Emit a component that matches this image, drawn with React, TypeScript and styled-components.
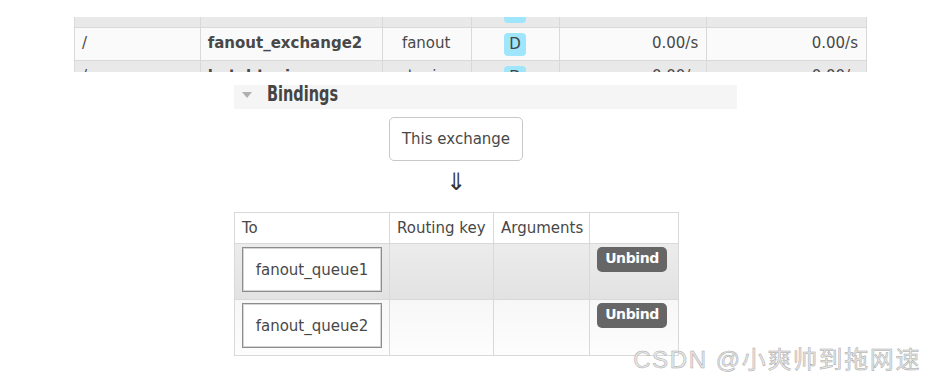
import React, { FC } from 'react';
import styled, { createGlobalStyle } from 'styled-components';

const COLORS = {
  TEXT: '#484848',
  BORDER: '#d9d9d9',
  ROW_DARK: '#e9e9e9',
  ROW_LIGHT: '#fafafa',
  BADGE: '#9fe6fc',
  BAR: '#f5f5f5',
  BUTTON: '#666666'
};

const GlobalStyle = createGlobalStyle`
  html, body {
    margin: 0;
    padding: 0;
    background: #ffffff;
  }
  body {
    font-family: 'DejaVu Sans', Verdana, sans-serif;
    color: ${COLORS.TEXT};
  }
`;

const Page = styled.div`
  position: relative;
  width: 935px;
  height: 382px;
  padding-top: 17px;
  box-sizing: border-box;
  overflow: hidden;
`;

/* cropped strip of the exchanges list */
const StripWindow = styled.div`
  margin-left: 74px;
  width: 793px;
  height: 55px;
  overflow: hidden;
`;

const ExchangeTable = styled.table`
  width: 793px;
  margin-top: -23px;
  border-collapse: collapse;
  font-size: 15px;
`;

const ExchangeRow = styled.tr<{ $dark: boolean }>`
  background: ${(p) => (p.$dark ? COLORS.ROW_DARK : COLORS.ROW_LIGHT)};
`;

const Cell = styled.td<{ $align?: string; $bold?: boolean; $w: number }>`
  width: ${(p) => p.$w}px;
  height: 33px;
  padding: 0 8px 3px 7px;
  box-sizing: border-box;
  border: 1px solid ${COLORS.BORDER};
  text-align: ${(p) => p.$align || 'left'};
  font-weight: ${(p) => (p.$bold ? 700 : 400)};
  white-space: nowrap;
`;

const Badge = styled.span`
  display: inline-block;
  width: 22px;
  height: 23px;
  line-height: 23px;
  margin-top: 3px;
  border-radius: 4px;
  background: ${COLORS.BADGE};
  color: #444;
  text-align: center;
  font-size: 15px;
`;

/* bindings section */
const Section = styled.div`
  margin: 13px 0 0 234px;
  width: 503px;
`;

const SectionBar = styled.div`
  display: flex;
  align-items: flex-end;
  height: 24px;
  padding-left: 8px;
  background: ${COLORS.BAR};
  overflow: hidden;
`;

const Caret = styled.span`
  width: 0;
  height: 0;
  margin: 0 15px 11px 0;
  border-left: 5px solid transparent;
  border-right: 5px solid transparent;
  border-top: 6px solid #b0b0b0;
`;

const SectionTitle = styled.h2`
  margin: 0 0 4px;
  font-size: 14.5px;
  line-height: 15px;
  font-weight: 700;
  color: #444;
  transform: scaleY(1.45);
  transform-origin: bottom;
`;

const SectionBody = styled.div`
  display: flex;
  flex-direction: column;
`;

const ExchangeBox = styled.div`
  margin: 8px 0 0 155px;
  width: 134px;
  height: 44px;
  box-sizing: border-box;
  border: 1px solid #c8c8c8;
  border-radius: 5px;
  display: flex;
  align-items: center;
  justify-content: center;
  font-size: 15px;
`;

const Arrow = styled.div`
  margin-left: 155px;
  width: 134px;
  height: 51px;
  line-height: 42px;
  text-align: center;
  font-size: 24px;
  color: #333;
`;

const BindingsTable = styled.table`
  width: 444px;
  table-layout: fixed;
  border-collapse: collapse;
  font-size: 15px;
`;

const HeadCell = styled.th<{ $w: number }>`
  width: ${(p) => p.$w}px;
  height: 31px;
  padding: 0 6px 1px 7px;
  box-sizing: border-box;
  border: 1px solid ${COLORS.BORDER};
  text-align: left;
  font-weight: 400;
  white-space: nowrap;
  background: #fff;
`;

const BindingRow = styled.tr<{ $dark: boolean }>`
  background: ${(p) =>
    p.$dark
      ? 'linear-gradient(#ececec, #e2e2e2)'
      : 'linear-gradient(#f7f7f7, #fdfdfd)'};
`;

const BindingCell = styled.td`
  height: 56px;
  padding: 3px 6px 6px 7px;
  box-sizing: border-box;
  border: 1px solid ${COLORS.BORDER};
  vertical-align: top;
`;

const QueueBox = styled.div`
  width: 140px;
  height: 45px;
  box-sizing: border-box;
  border: 1px solid #8c8c8c;
  box-shadow: inset 0 0 0 1px #d6d6d6;
  background: #fff;
  display: flex;
  align-items: center;
  justify-content: center;
`;

const UnbindButton = styled.button`
  width: 70px;
  height: 25px;
  padding: 0 0 3px;
  border: none;
  border-radius: 5px;
  background: ${COLORS.BUTTON};
  color: #fff;
  font-family: 'DejaVu Sans', Verdana, sans-serif;
  font-size: 14px;
  letter-spacing: -0.4px;
  font-weight: 700;
`;

const Watermark = styled.div`
  position: absolute;
  right: 14px;
  bottom: 7px;
  font-family: 'Liberation Sans', 'Noto Sans CJK SC', sans-serif;
  font-size: 24px;
  letter-spacing: 1.6px;
  color: #e8e8e8;
  -webkit-text-stroke: 0.5px #a8a8a8;
`;

const COL_W = [126, 182, 89, 89, 147, 160];

const exchanges = [
  // only the bottom edge of this row is inside the crop, its texts are out of view
  { vhost: '', name: '', type: '', in: '', out: '' },
  { vhost: '/', name: 'fanout_exchange2', type: 'fanout', in: '0.00/s', out: '0.00/s' },
  { vhost: '/', name: 'hotel.topic', type: 'topic', in: '0.00/s', out: '0.00/s' }
];

const bindings = ['fanout_queue1', 'fanout_queue2'];

const App: FC = () => (
  <Page>
    <GlobalStyle />
    <StripWindow>
      <ExchangeTable>
        <tbody>
          {exchanges.map((ex, i) => (
            <ExchangeRow key={i} $dark={i !== 1}>
              <Cell $w={COL_W[0]}>{ex.vhost}</Cell>
              <Cell $w={COL_W[1]} $bold>
                {ex.name}
              </Cell>
              <Cell $w={COL_W[2]} $align="center">
                {ex.type}
              </Cell>
              <Cell $w={COL_W[3]} $align="center">
                <Badge>D</Badge>
              </Cell>
              <Cell $w={COL_W[4]} $align="right">
                {ex.in}
              </Cell>
              <Cell $w={COL_W[5]} $align="right">
                {ex.out}
              </Cell>
            </ExchangeRow>
          ))}
        </tbody>
      </ExchangeTable>
    </StripWindow>

    <Section>
      <SectionBar>
        <Caret />
        <SectionTitle>Bindings</SectionTitle>
      </SectionBar>
      <SectionBody>
        <ExchangeBox>This exchange</ExchangeBox>
        <Arrow>⇓</Arrow>
        <BindingsTable>
          <thead>
            <tr>
              <HeadCell $w={155}>To</HeadCell>
              <HeadCell $w={104}>Routing key</HeadCell>
              <HeadCell $w={96}>Arguments</HeadCell>
              <HeadCell $w={89} />
            </tr>
          </thead>
          <tbody>
            {bindings.map((q, i) => (
              <BindingRow key={q} $dark={i === 0}>
                <BindingCell>
                  <QueueBox>{q}</QueueBox>
                </BindingCell>
                <BindingCell />
                <BindingCell />
                <BindingCell>
                  <UnbindButton>Unbind</UnbindButton>
                </BindingCell>
              </BindingRow>
            ))}
          </tbody>
        </BindingsTable>
      </SectionBody>
    </Section>

    <Watermark>CSDN @小爽帅到拖网速</Watermark>
  </Page>
);

export default App;
